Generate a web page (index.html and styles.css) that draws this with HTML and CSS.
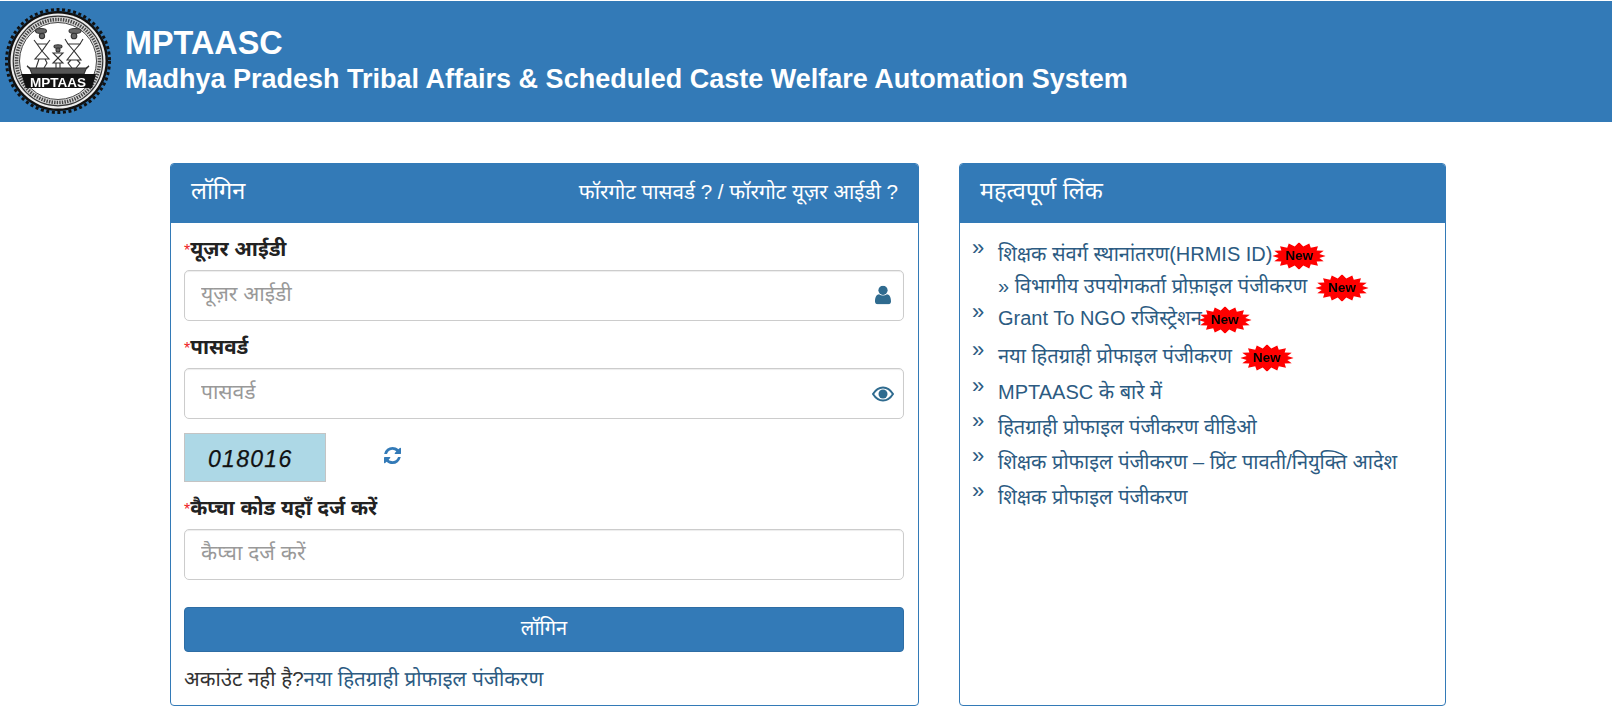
FILE: index.html
```html
<!DOCTYPE html>
<html lang="hi">
<head>
<meta charset="utf-8">
<title>MPTAASC</title>
<link rel="stylesheet" href="styles.css">
</head>
<body>
<header class="site-header">
  <svg class="logo" viewBox="0 0 110 110" width="110" height="110" aria-label="MPTAAS">
    <circle cx="56" cy="54" r="51.500" fill="none" stroke="#111" stroke-width="3" stroke-dasharray="3 2.600"/>
    <circle cx="56" cy="54" r="50" fill="#111"/>
    <circle cx="56" cy="54" r="47.500" fill="#eee"/>
    <circle cx="56" cy="54" r="44.800" fill="#d8d8d8" stroke="#333" stroke-width="1.200"/>
    <circle cx="56" cy="54" r="41.500" fill="none" stroke="#444" stroke-width="3.600" stroke-dasharray="1.400 1.200"/>
    <circle cx="56" cy="54" r="38.500" fill="#fff" stroke="#333" stroke-width=".9"/>
    <g fill="none" stroke="#333" stroke-width="1.100">
      <ellipse cx="39" cy="24" rx="5.500" ry="2.500" fill="#666"/>
      <circle cx="40" cy="29" r="2.600" fill="#666"/>
      <path d="M32 33l3 4 10 0 3-4M35 37l5 7 5-7zM40 44l-7 8h14zM37 52l-3 9M43 52l2 4-3 5"/>
      <ellipse cx="73" cy="24" rx="6" ry="2.500" fill="#666"/>
      <circle cx="72" cy="29" r="2.800" fill="#666"/>
      <path d="M63 32l3 5 12 0 3-5M66 37l6 7 6-7zM72 44l-7 9h14zM69 53l-3 3 4 5M75 53l3 3-4 5"/>
      <ellipse cx="56" cy="39.500" rx="4" ry="1.800" fill="#666"/>
      <circle cx="56" cy="43" r="2" fill="#666"/>
      <path d="M51 46h10l-5 5zM56 51l-5 5h10zM54 56v5M58 56v5"/>
      <path d="M25 59l3 3 2 5h52l2-5 3-3-3 2H28z" fill="#555"/>
    </g>
    <path d="M19 67h75l-4 14H24z" fill="#111"/>
    <text x="56" y="79.500" class="logo-text" text-anchor="middle">MPTAAS</text>
  </svg>
  <div class="brand">
    <div class="brand-name">MPTAASC</div>
    <div class="brand-full">Madhya Pradesh Tribal Affairs &amp; Scheduled Caste Welfare Automation System</div>
  </div>
</header>
<main class="content">
  <section class="panel panel-login">
    <div class="panel-head">
      <span class="panel-title">लॉगिन</span>
      <a class="forgot">फॉरगोट पासवर्ड ? / फॉरगोट यूज़र आईडी ?</a>
    </div>
    <form class="panel-body login-form">
      <label class="field-label"><span class="req">*</span>यूज़र आईडी</label>
      <div class="control">
        <input class="input" placeholder="यूज़र आईडी">
        <svg class="control-icon icon-user" viewBox="0 0 16 19" width="16" height="19"><circle cx="8" cy="4.800" r="4.600" fill="#2f6b8f"/><path d="M0 16c0-5 2-7 4-7.200 2.500 1.600 5.500 1.600 8 0 2 .2 4 2.200 4 7.200 0 1.600-1 2.700-2.500 2.700H2.500C1 18.700 0 17.600 0 16z" fill="#2f6b8f"/></svg>
      </div>
      <label class="field-label"><span class="req">*</span>पासवर्ड</label>
      <div class="control">
        <input class="input" placeholder="पासवर्ड">
        <svg class="control-icon icon-eye" viewBox="0 0 22 16" width="22" height="16"><path d="M1 8c2.500-4 6-6.500 10-6.500S18.500 4 21 8c-2.500 4-6 6.500-10 6.500S3.500 12 1 8z" fill="none" stroke="#2f6b8f" stroke-width="2"/><circle cx="11" cy="8" r="4.500" fill="#2f6b8f"/></svg>
      </div>
      <div class="captcha-row">
        <div class="captcha"><span>018016</span></div>
        <svg class="refresh" viewBox="0 0 1536 1536" width="17" height="17"><path fill="#337ab7" d="M1511 928q0 5-1 7-64 268-268 434.500T764 1536q-146 0-282.500-55T238 1324l-129 129q-19 19-45 19t-45-19-19-45V960q0-26 19-45t45-19h448q26 0 45 19t19 45-19 45l-137 137q71 66 161 102t187 36q134 0 250-65t186-179q11-17 53-117 8-23 30-23h192q13 0 22.500 9.500t9.500 22.500zm25-800v448q0 26-19 45t-45 19h-448q-26 0-45-19t-19-45 19-45l138-138q-148-137-349-137-134 0-250 65T332 500q-11 17-53 117-8 23-30 23H50q-13 0-22.500-9.500T18 608v-7q65-268 270-434.500T768 0q146 0 284 55.500T1297 212l130-129q19-19 45-19t45 19 19 45z"/></svg>
      </div>
      <label class="field-label"><span class="req">*</span>कैप्चा कोड यहाँ दर्ज करें</label>
      <div class="control">
        <input class="input" placeholder="कैप्चा दर्ज करें">
      </div>
      <button type="button" class="submit">लॉगिन</button>
      <p class="signup">अकाउंट नही है?<a>नया हितग्राही प्रोफाइल पंजीकरण</a></p>
    </form>
  </section>
  <section class="panel panel-links">
    <div class="panel-head">
      <span class="panel-title">महत्वपूर्ण लिंक</span>
    </div>
    <ul class="panel-body links">
      <li class="tall">
        <a>शिक्षक संवर्ग स्थानांतरण(HRMIS ID)<span class="burst burst-near"><span class="burst-text">New</span></span></a>
        <a class="sub">» विभागीय उपयोगकर्ता प्रोफ़ाइल पंजीकरण<span class="burst burst-far"><span class="burst-text">New</span></span></a>
      </li>
      <li class="grant"><a>Grant To NGO रजिस्ट्रेशन<span class="burst burst-over"><span class="burst-text">New</span></span></a></li>
      <li class="naya"><a>नया हितग्राही प्रोफाइल पंजीकरण<span class="burst burst-far"><span class="burst-text">New</span></span></a></li>
      <li><a>MPTAASC के बारे में</a></li>
      <li><a>हितग्राही प्रोफाइल पंजीकरण वीडिओ</a></li>
      <li><a>शिक्षक प्रोफाइल पंजीकरण – प्रिंट पावती/नियुक्ति आदेश</a></li>
      <li><a>शिक्षक प्रोफाइल पंजीकरण</a></li>
    </ul>
  </section>
</main>
</body>
</html>
```
FILE: styles.css
```css
* { box-sizing: border-box; }
html, body { margin: 0; height: 100%; overflow: hidden; }
body {
  font-family: "Liberation Sans", "Noto Sans Devanagari", "Noto Sans", sans-serif;
  font-size: 18px;
  color: #333;
  background: #fff;
}
.site-header {
  margin-top: 1px;
  height: 121px;
  background: #337ab7;
  color: #fff;
  display: flex;
  align-items: center;
  padding-left: 2px;
  gap: 13px;
}
.logo { flex: none; filter: blur(.35px); }
.logo-text { font: bold 13.5px "Liberation Sans", sans-serif; fill: #fff; }
.brand { font-weight: bold; margin-top: -3px; }
.brand-name { font-size: 32.4px; line-height: 38px; }
.brand-full { font-size: 27px; line-height: 34px; }
.content {
  display: flex;
  gap: 40px;
  padding: 41px 0 0 170px;
}
.panel {
  border: 1px solid #337ab7;
  border-radius: 4px;
  height: 543px;
  overflow: hidden;
}
.panel-login { width: 749px; }
.panel-links { width: 487px; }
.panel-head {
  height: 59px;
  background: #337ab7;
  color: #fff;
  display: flex;
  align-items: center;
  justify-content: space-between;
  padding: 0 20px;
}
.panel-title { font-size: 23.5px; }
.forgot { font-size: 20.6px; }
.login-form { padding: 13px 14px 0 13px; }
.field-label {
  display: block;
  font-size: 20.6px;
  font-weight: bold;
  line-height: 25px;
  margin-bottom: 7px;
  color: #222;
}
.req { color: #e22; font-weight: normal; font-size: 16px; }
.control { position: relative; margin-bottom: 13px; }
.input {
  display: block;
  width: 100%;
  height: 51px;
  border: 1px solid #ccc;
  border-radius: 5px;
  padding: 0 16px 4px;
  font: 21px "Liberation Sans", "Noto Sans Devanagari", sans-serif;
  box-shadow: inset 0 1px 1px rgba(0,0,0,.075);
}
.input::placeholder { color: #999; }
.control-icon { position: absolute; top: 50%; transform: translateY(-50%); }
.icon-user { right: 13px; top: 49%; }
.icon-eye { right: 10px; }
.captcha-row { display: flex; align-items: center; gap: 58px; margin: 14px 0 13px; }
.captcha {
  width: 142px;
  height: 49px;
  background: #add8e6;
  border: 1px solid #c4c4c4;
  display: flex;
  align-items: center;
  padding: 3px 0 0 23px;
}
.captcha span { font: italic 23px "Liberation Sans", sans-serif; letter-spacing: 1.3px; color: #111; -webkit-text-stroke: .25px #111; }
.refresh { margin-bottom: 4px; }
.submit {
  display: block;
  width: 100%;
  height: 45px;
  margin-top: 27px;
  border: 1px solid #2e6da4;
  border-radius: 4px;
  background: #337ab7;
  color: #fff;
  font: 20px "Liberation Sans", "Noto Sans Devanagari", sans-serif;
}
.signup { margin: 14px 0 0; font-size: 20.5px; line-height: 26px; }
.signup a { color: #2c5b82; }
.links { list-style: none; margin: 0; padding: 16px 13px 0 38px; font-size: 20px; }
.links li { position: relative; height: 35px; line-height: 30px; white-space: nowrap; }
.links li.tall { height: 64px; }
.links li.grant { height: 38px; }
.links li.naya { height: 36px; }
.links li::before { content: "»"; position: absolute; left: -26px; top: -6px; font-size: 22px; color: #2c5b82; }
.links a { display: block; color: #2c5b82; }
.links .sub { margin-top: 2px; }
.burst {
  position: relative;
  display: inline-flex;
  align-items: center;
  justify-content: center;
  width: 50px;
  height: 26px;
  vertical-align: middle;
  filter: blur(.5px);
}
.burst::before {
  content: "";
  position: absolute;
  inset: 0;
  background: #f00;
  transform: scale(1.07, 1.05);
  clip-path: polygon(50px 13px,44px 14.8px,48.1px 18px,41.5px 18.2px,42.7px 22.2px,36px 20.8px,34.6px 25px,29px 22px,25px 26px,21px 22px,15.4px 25px,14px 20.8px,7.3px 22.2px,8.5px 18.2px,1.9px 18px,6px 14.8px,0 13px,6px 11.2px,1.9px 8px,8.5px 7.8px,7.3px 3.8px,14px 5.2px,15.4px 1px,21px 4px,25px 0,29px 4px,34.6px 1px,36px 5.2px,42.7px 3.8px,41.5px 7.8px,48.1px 8px,44px 11.2px);
}
.burst-near { margin-left: 2px; }
.burst-far { margin-left: 10px; }
.burst-over { margin-left: -2px; }
.burst-text { position: relative; font: bold 13.5px "Liberation Sans", sans-serif; color: #000; }
```
